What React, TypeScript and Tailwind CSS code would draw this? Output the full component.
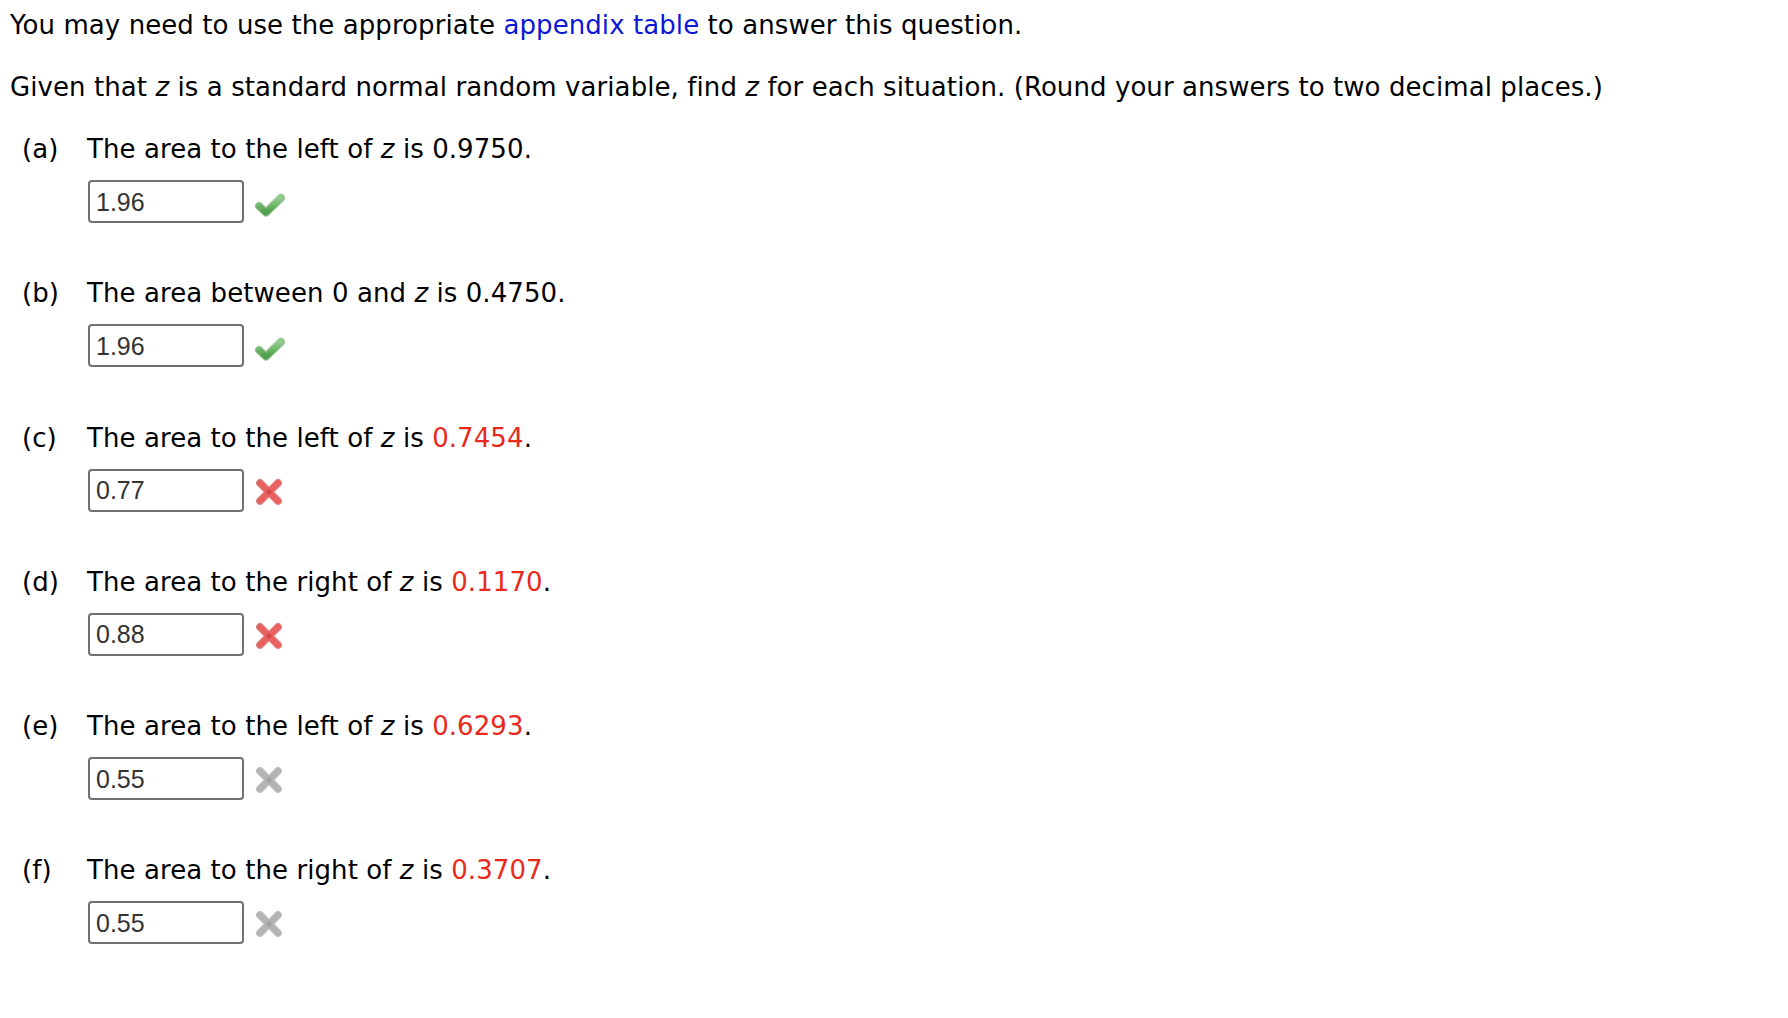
import React from "react";

type Mark = "check" | "wrong" | "blank";

const items: { label: string; pre: string; post: string; value: string; answer: string; bad: boolean; mark: Mark }[] = [
  { label: "(a)", pre: "The area to the left of ", post: " is ", value: "0.9750", answer: "1.96", bad: false, mark: "check" },
  { label: "(b)", pre: "The area between 0 and ", post: " is ", value: "0.4750", answer: "1.96", bad: false, mark: "check" },
  { label: "(c)", pre: "The area to the left of ", post: " is ", value: "0.7454", answer: "0.77", bad: true, mark: "wrong" },
  { label: "(d)", pre: "The area to the right of ", post: " is ", value: "0.1170", answer: "0.88", bad: true, mark: "wrong" },
  { label: "(e)", pre: "The area to the left of ", post: " is ", value: "0.6293", answer: "0.55", bad: true, mark: "blank" },
  { label: "(f)", pre: "The area to the right of ", post: " is ", value: "0.3707", answer: "0.55", bad: true, mark: "blank" },
];

function CheckIcon() {
  return (
    <svg width="32" height="26" viewBox="0 0 32 26" className="mt-[6px]">
      <defs>
        <linearGradient id="chk" x1="0" y1="0" x2="0" y2="1">
          <stop offset="0" stopColor="#8fd08a" />
          <stop offset="1" stopColor="#4f9e4c" />
        </linearGradient>
      </defs>
      <path d="M5 14 L12 20.5 L27 6" fill="none" stroke="#4a8f48" strokeWidth="8" strokeLinecap="round" strokeLinejoin="round" opacity="0.55" />
      <path d="M5 14 L12 20.5 L27 6" fill="none" stroke="url(#chk)" strokeWidth="6" strokeLinecap="round" strokeLinejoin="round" />
    </svg>
  );
}

function CrossIcon({ color, edge }: { color: string; edge: string }) {
  return (
    <svg width="30" height="30" viewBox="0 0 30 30" className="mt-[3px]">
      <path d="M6 6 L24 24 M24 6 L6 24" fill="none" stroke={edge} strokeWidth="8" strokeLinecap="round" opacity="0.6" />
      <path d="M6 6 L24 24 M24 6 L6 24" fill="none" stroke={color} strokeWidth="6" strokeLinecap="round" />
      <circle cx="15" cy="15" r="2.5" fill={edge} opacity="0.7" />
    </svg>
  );
}

export default function App() {
  return (
    <div className="min-h-screen bg-white pt-[9px] pl-[10px] font-['DejaVu_Sans',Verdana,sans-serif] text-[26px] leading-[32px] tracking-[0.08px] text-black">
      <p>
        You may need to use the appropriate <span className="text-[#0b18d6]">appendix table</span> to answer this question.
      </p>
      <p className="mt-[30px]">
        Given that <i>z</i> is a standard normal random variable, find <i>z</i> for each situation. (Round your answers to two decimal places.)
      </p>
      <div className="mt-[30px] flex flex-col gap-[54.3px]">
        {items.map((it) => (
          <div key={it.label} className="flex">
            <span className="w-[77px] shrink-0 pl-[12px]">{it.label}</span>
            <div>
              <p>
                {it.pre}
                <i>z</i>
                {it.post}
                <span className={it.bad ? "text-[#e8291c]" : ""}>{it.value}</span>.
              </p>
              <div className="mt-[15px] flex items-center gap-[10px] pl-[1px]">
                <div className="flex h-[43px] w-[156px] items-center rounded-[4px] border-2 border-[#707070] pl-[6px] font-['Liberation_Sans',Arial,sans-serif] text-[25px] tracking-normal text-[#333]">
                  {it.answer}
                </div>
                {it.mark === "check" && <CheckIcon />}
                {it.mark === "wrong" && <CrossIcon color="#e86060" edge="#c94040" />}
                {it.mark === "blank" && <CrossIcon color="#b4b4b4" edge="#999999" />}
              </div>
            </div>
          </div>
        ))}
      </div>
    </div>
  );
}
